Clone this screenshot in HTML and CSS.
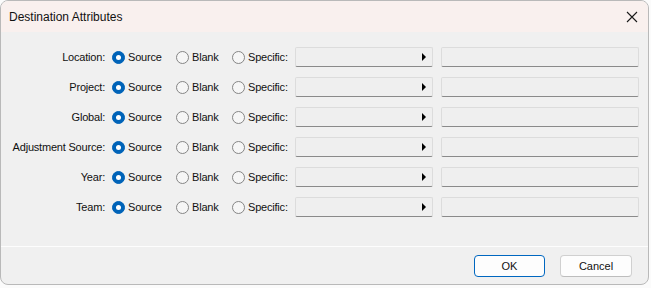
FILE: index.html
```html
<!DOCTYPE html>
<html lang="en">

<head>
	<meta charset="UTF-8">
	<title>Destination Attributes</title>
	<link rel="stylesheet" href="styles.css">
</head>

<body>
	<div class="window">
		<div class="titlebar">
			<span class="title">Destination Attributes</span>
			<span class="close">
				<svg width="12" height="12" viewBox="0 0 12 12">
					<path d="M1 1 L11 11 M11 1 L1 11" stroke="#1a1a1a" stroke-width="1.1" fill="none" />
				</svg>
			</span>
		</div>
		<div class="content">
			<div class="row">
				<span class="label">Location:</span>
				<span class="opt"><i class="radio on"></i>Source</span>
				<span class="opt"><i class="radio"></i>Blank</span>
				<span class="opt"><i class="radio"></i>Specific:</span>
				<span class="combo"><b class="arrow"></b></span>
				<span class="field"></span>
			</div>
			<div class="row">
				<span class="label">Project:</span>
				<span class="opt"><i class="radio on"></i>Source</span>
				<span class="opt"><i class="radio"></i>Blank</span>
				<span class="opt"><i class="radio"></i>Specific:</span>
				<span class="combo"><b class="arrow"></b></span>
				<span class="field"></span>
			</div>
			<div class="row">
				<span class="label">Global:</span>
				<span class="opt"><i class="radio on"></i>Source</span>
				<span class="opt"><i class="radio"></i>Blank</span>
				<span class="opt"><i class="radio"></i>Specific:</span>
				<span class="combo"><b class="arrow"></b></span>
				<span class="field"></span>
			</div>
			<div class="row">
				<span class="label">Adjustment Source:</span>
				<span class="opt"><i class="radio on"></i>Source</span>
				<span class="opt"><i class="radio"></i>Blank</span>
				<span class="opt"><i class="radio"></i>Specific:</span>
				<span class="combo"><b class="arrow"></b></span>
				<span class="field"></span>
			</div>
			<div class="row">
				<span class="label">Year:</span>
				<span class="opt"><i class="radio on"></i>Source</span>
				<span class="opt"><i class="radio"></i>Blank</span>
				<span class="opt"><i class="radio"></i>Specific:</span>
				<span class="combo"><b class="arrow"></b></span>
				<span class="field"></span>
			</div>
			<div class="row">
				<span class="label">Team:</span>
				<span class="opt"><i class="radio on"></i>Source</span>
				<span class="opt"><i class="radio"></i>Blank</span>
				<span class="opt"><i class="radio"></i>Specific:</span>
				<span class="combo"><b class="arrow"></b></span>
				<span class="field"></span>
			</div>
		</div>
		<div class="footer">
			<button class="btn btn-ok">OK</button>
			<button class="btn">Cancel</button>
		</div>
	</div>
</body>

</html>
```

FILE: styles.css
```css
* {
	margin: 0;
	padding: 0;
	box-sizing: border-box;
}

body {
	background: #fbfbfb;
	font-family: "Liberation Sans", Arial, sans-serif;
	font-size: 11px;
	letter-spacing: -0.2px;
	color: #111;
}

.window {
	width: 649px;
	height: 285px;
	border: 1px solid #b9b9b9;
	border-radius: 8px;
	overflow: hidden;
	background: #f0f0f0;
	display: flex;
	flex-direction: column;
}

.titlebar {
	height: 31px;
	background: #f9f0ee;
	display: flex;
	align-items: center;
	justify-content: space-between;
	padding: 0 9px 0 8px;
}

.title {
	font-size: 12px;
	letter-spacing: 0;
	color: #111;
}

.close {
	display: flex;
	width: 14px;
	justify-content: center;
}

.content {
	height: 214px;
	padding-top: 15px;
	display: flex;
	flex-direction: column;
	gap: 10px;
}

.row {
	display: grid;
	grid-template-columns: 111px 64px 56px 63px 146px 198px;
	align-items: center;
	height: 20px;
}

.label {
	text-align: right;
	padding-right: 7px;
	white-space: nowrap;
}

.opt {
	display: flex;
	align-items: center;
	gap: 3px;
	white-space: nowrap;
}

.radio {
	position: relative;
	width: 13px;
	height: 13px;
	border-radius: 50%;
	border: 1px solid #858585;
	background: #f6f6f6;
}

.radio.on {
	background: #0063b8;
	border-color: #0063b8;
}

.radio.on:after {
	content: "";
	position: absolute;
	left: 3px;
	top: 3px;
	width: 5px;
	height: 5px;
	border-radius: 50%;
	background: #fff;
}

.combo,
.field {
	display: flex;
	align-items: center;
	justify-content: flex-end;
	height: 20px;
	border: 1px solid #dcdcdc;
	border-bottom: 1px solid #8a8a8a;
	border-radius: 2px;
	background: #efefef;
}

.combo {
	width: 138px;
	padding-right: 6px;
}

.arrow {
	width: 0;
	height: 0;
	border-top: 4px solid transparent;
	border-bottom: 4px solid transparent;
	border-left: 4px solid #000;
}

.footer {
	flex: 1;
	border-top: 1px solid #fdfdfd;
	display: flex;
	justify-content: flex-end;
	align-items: flex-start;
	gap: 15px;
	padding: 8px 16px 0 0;
}

.btn {
	width: 72px;
	height: 22px;
	border: 1px solid #d0d0d0;
	border-bottom-color: #bdbdbd;
	border-radius: 4px;
	background: #fdfdfd;
	font-family: "Liberation Sans", Arial, sans-serif;
	font-size: 11px;
	color: #111;
}

.btn-ok {
	width: 71px;
	border-color: #0067c0;
}
```
